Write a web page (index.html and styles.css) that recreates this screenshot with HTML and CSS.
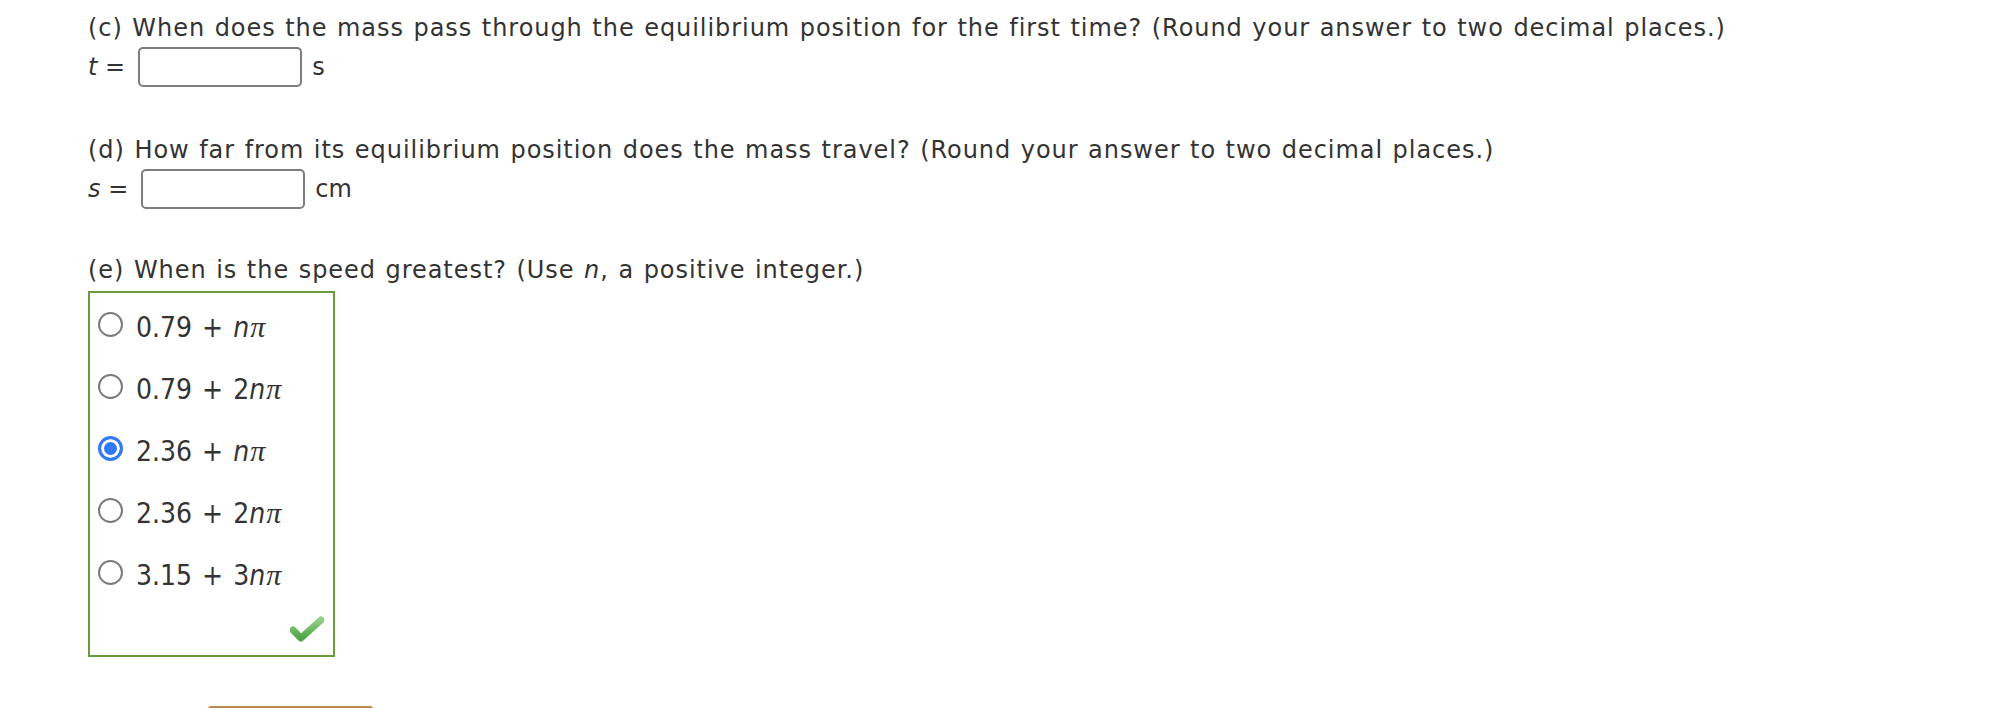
FILE: index.html
```html
<!DOCTYPE html>
<html lang="en">
<head>
  <meta charset="UTF-8">
  <title>Simple Harmonic Motion</title>
  <link rel="stylesheet" href="styles.css">
</head>
<body>

  <div class="pregunta">
    <p class="enunciado">(c) When does the mass pass through the equilibrium position for the first time? (Round your answer to two decimal places.)</p>
    <div class="respuesta">
      <span class="variable"><i>t</i> =</span>
      <input class="campo" type="text">
      <span class="unidad">s</span>
    </div>
  </div>

  <div class="pregunta segunda">
    <p class="enunciado">(d) How far from its equilibrium position does the mass travel? (Round your answer to two decimal places.)</p>
    <div class="respuesta">
      <span class="variable"><i>s</i> =</span>
      <input class="campo" type="text">
      <span class="unidad">cm</span>
    </div>
  </div>

  <div class="pregunta ultima">
    <p class="enunciado">(e) When is the speed greatest? (Use <i>n</i>, a positive integer.)</p>
    <div class="opciones">
      <label class="opcion"><span class="radio"></span><span class="texto">0.79 + <i>n</i><i class="pi">π</i></span></label>
      <label class="opcion"><span class="radio"></span><span class="texto">0.79 + 2<i>n</i><i class="pi">π</i></span></label>
      <label class="opcion"><span class="radio marcado"></span><span class="texto">2.36 + <i>n</i><i class="pi">π</i></span></label>
      <label class="opcion"><span class="radio"></span><span class="texto">2.36 + 2<i>n</i><i class="pi">π</i></span></label>
      <label class="opcion"><span class="radio"></span><span class="texto">3.15 + 3<i>n</i><i class="pi">π</i></span></label>
      <div class="correcto">
        <svg width="34" height="28" viewBox="0 0 34 28">
          <defs>
            <linearGradient id="verde" x1="0" y1="0" x2="0" y2="1">
              <stop offset="0" stop-color="#8fd07f"/>
              <stop offset="1" stop-color="#4fa44a"/>
            </linearGradient>
          </defs>
          <path d="M3 15 L11 23 L31 5" fill="none" stroke="url(#verde)" stroke-width="7" stroke-linecap="round" stroke-linejoin="round"/>
        </svg>
      </div>
    </div>
  </div>

  <div class="enviar"></div>

</body>
</html>
```

FILE: styles.css
```css
html, body {
  overflow: hidden;
}

body {
  margin: 0;
  padding: 13px 0 0 88px;
  font-family: "DejaVu Sans", Verdana, sans-serif;
  font-size: 24px;
  color: #333;
  background: white;
}

.pregunta {
  margin-bottom: 48px;
}

.pregunta.segunda {
  margin-bottom: 46px;
}

.pregunta.ultima {
  margin-bottom: 0;
}

.enunciado {
  margin: 0;
  line-height: 30px;
  white-space: nowrap;
  letter-spacing: 0.95px;
  word-spacing: 1px;
}

.respuesta {
  display: flex;
  align-items: center;
  margin-top: 4px;
  height: 40px;
}

.variable {
  margin-right: 13px;
}

.campo {
  width: 164px;
  height: 40px;
  box-sizing: border-box;
  border: 2px solid #7d7d7d;
  border-radius: 5px;
  margin: 0 10px 0 0;
  padding: 0;
}

.opciones {
  margin-top: 6px;
  width: 247px;
  height: 366px;
  box-sizing: border-box;
  border: 2px solid #6a9c3e;
  display: flex;
  flex-direction: column;
}

.opcion {
  display: flex;
  align-items: center;
  height: 62px;
  font-family: "DejaVu Sans Condensed", "DejaVu Sans", sans-serif;
  font-size: 28px;
}

.radio {
  width: 25px;
  height: 25px;
  box-sizing: border-box;
  margin-left: 8px;
  margin-right: 13px;
  border: 2px solid #7a7a7a;
  border-radius: 50%;
  background: white;
}

.radio.marcado {
  border: 3px solid #3179f5;
  background: #3179f5;
  box-shadow: inset 0 0 0 3px white;
}

.texto {
  padding-top: 5px;
  word-spacing: 2px;
}

.pi {
  font-family: "Liberation Serif", serif;
  font-size: 30px;
  margin-left: 1px;
}

.correcto {
  flex: 1;
  display: flex;
  justify-content: flex-end;
  align-items: flex-end;
  padding: 0 9px 12px 0;
}

.enviar {
  margin: 49px 0 0 120px;
  width: 165px;
  height: 40px;
  box-sizing: border-box;
  border: 2px solid #c0864a;
  border-radius: 3px;
}
```
